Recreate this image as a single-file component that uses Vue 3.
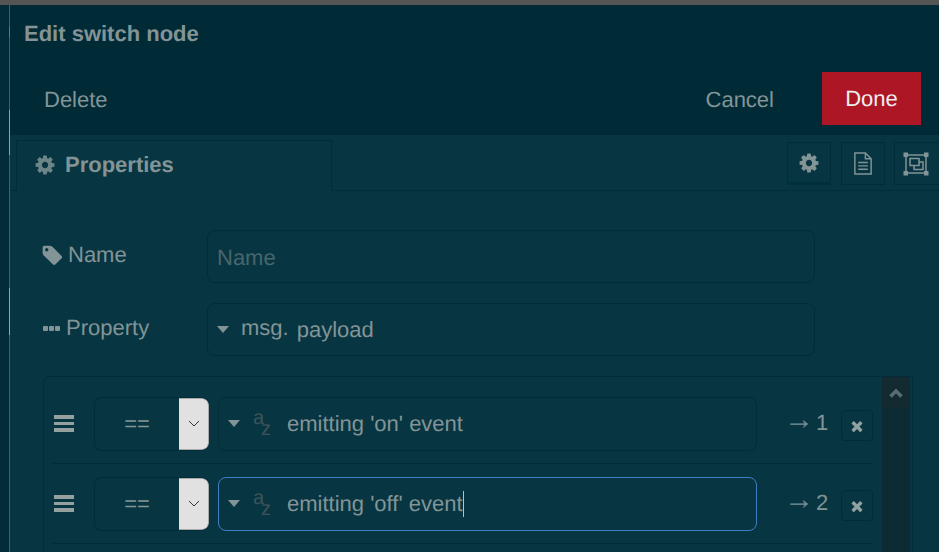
<script setup>
const rules = [
  { id: 1, text: "emitting 'on' event", port: 1, focused: false },
  { id: 2, text: "emitting 'off' event", port: 2, focused: true },
]
const cog = "M1152 896q0-106-75-181t-181-75-181 75-75 181 75 181 181 75 181-75 75-181zm512-109v222q0 12-8 23t-20 13l-185 28q-19 54-39 91 35 50 107 138 10 12 10 25t-9 23q-27 37-99 108t-94 71q-12 0-26-9l-138-108q-44 23-91 38-16 136-29 186-7 28-36 28h-222q-14 0-24.500-8.500t-11.500-21.500l-28-184q-49-16-90-37l-141 107q-10 9-25 9-14 0-25-11-126-114-165-168-7-10-7-23 0-12 8-23 15-21 51-66.500t54-70.500q-27-50-41-99l-183-27q-13-2-21-12.500t-8-23.500v-222q0-12 8-23t19-13l186-28q14-46 39-92-40-57-107-138-10-12-10-24 0-10 9-23 26-36 98.500-107.500t94.500-71.500q13 0 26 10l138 107q44-23 91-38 16-136 29-186 7-28 36-28h222q14 0 24.500 8.500t11.500 21.500l28 184q49 16 90 37l142-107q9-9 24-9 13 0 25 10 129 119 165 170 7 8 7 22 0 12-8 23-15 21-51 66.500t-54 70.500q26 50 41 98l183 28q13 2 21 12.500t8 23.500z"
const tag = "M576 448q0-53-37.500-90.500t-90.500-37.500-90.500 37.500-37.500 90.500 37.500 90.500 90.500 37.500 90.500-37.500 37.500-90.500zm1067 576q0 53-37 90l-491 492q-39 37-91 37-53 0-90-37l-715-716q-38-37-64.500-101t-26.500-117v-416q0-52 38-90t90-38h416q53 0 117 26.500t102 64.500l715 714q37 39 37 91z"
const times = "M1490 1322q0 40-28 68l-136 136q-28 28-68 28t-68-28l-294-294-294 294q-28 28-68 28t-68-28l-136-136q-28-28-28-68t28-68l294-294-294-294q-28-28-28-68t28-68l136-136q28-28 68-28t68 28l294 294 294-294q28-28 68-28t68 28l136 136q28 28 28 68t-28 68l-294 294 294 294q28 28 28 68z"
</script>

<template>
  <div class="page">
    <div class="topbar"></div>
    <div class="main">
      <div class="strip"></div>
      <div class="tray">
        <header class="head">
          <div class="title">Edit switch node</div>
          <div class="actions">
            <span class="delete">Delete</span>
            <span class="cancel">Cancel</span>
            <span class="done">Done</span>
          </div>
        </header>
        <div class="tabbar">
          <div class="tab">
            <svg class="tab-cog" viewBox="0 0 1792 1792"><path :d="cog" fill-rule="evenodd" /></svg>
            <span>Properties</span>
          </div>
          <div class="tools">
            <div class="tool active">
              <svg class="tool-cog" viewBox="0 0 1792 1792"><path :d="cog" fill-rule="evenodd" /></svg>
            </div>
            <div class="tool">
              <svg class="tool-file" viewBox="0 0 20 24" fill="none" stroke="currentColor" stroke-width="1.500">
                <path d="M1.500 1h11l6 6v16h-17z" />
                <path d="M12.500 1v6h6" />
                <path d="M5 11h10M5 14.500h10M5 18h10" />
              </svg>
            </div>
            <div class="tool">
              <svg class="tool-group" viewBox="0 0 26 24" fill="none" stroke="currentColor" stroke-width="1.500">
                <path d="M3 3h20v18h-20z" />
                <path d="M7 6.500h9v7h-9z" />
                <path d="M11 13.500v4h9v-7.500h-4" />
                <g fill="currentColor" stroke="none">
                  <rect x="0.500" y="0.500" width="4.500" height="4.500" />
                  <rect x="21" y="0.500" width="4.500" height="4.500" />
                  <rect x="0.500" y="19" width="4.500" height="4.500" />
                  <rect x="21" y="19" width="4.500" height="4.500" />
                </g>
              </svg>
            </div>
          </div>
        </div>
        <div class="body">
          <div class="form-row">
            <label class="lab">
              <svg class="tag" viewBox="0 0 1792 1792"><path :d="tag" fill-rule="evenodd" /></svg>
              <span>Name</span>
            </label>
            <div class="field placeholder"><span>Name</span></div>
          </div>
          <div class="form-row">
            <label class="lab">
              <span class="dots"><i></i><i></i><i></i></span>
              <span>Property</span>
            </label>
            <div class="field typed">
              <span class="caret-down"></span>
              <span class="msg">msg.</span>
              <span class="payload">payload</span>
            </div>
          </div>
          <div class="list">
            <div class="rows">
              <div v-for="r in rules" :key="r.id" class="rule">
                <span class="grip"><i></i><i></i><i></i></span>
                <div class="select">
                  <span class="op">==</span>
                  <span class="chev">
                    <svg viewBox="0 0 12 7" fill="none" stroke="#333" stroke-width="1"><path d="M1 1l5 5 5-5" /></svg>
                  </span>
                </div>
                <div class="value" :class="{ focused: r.focused }">
                  <span class="caret-down"></span>
                  <span class="az"><span class="a">a</span><span class="z">z</span></span>
                  <span class="vtext">{{ r.text }}<span v-if="r.focused" class="cursor"></span></span>
                </div>
                <span class="port"><span class="arrow">→</span><span class="num">{{ r.port }}</span></span>
                <span class="x">
                  <svg viewBox="0 0 1792 1792"><path :d="times" /></svg>
                </span>
              </div>
            </div>
            <div class="scroll">
              <div class="up">
                <svg viewBox="0 0 14 10" fill="none" stroke="currentColor" stroke-width="3.500"><path d="M1.500 8.500l5.500-5.500 5.500 5.500" /></svg>
              </div>
            </div>
          </div>
        </div>
      </div>
    </div>
  </div>
</template>

<style>
html, body { margin: 0; background: #063440; overflow: hidden; }
</style>

<style scoped>
.page {
  width: 939px;
  height: 552px;
  overflow: hidden;
  display: flex;
  flex-direction: column;
  font-family: "Liberation Sans", Arial, sans-serif;
  font-size: 22px;
  color: #839496;
  text-rendering: geometricPrecision;
}
.topbar { height: 5px; background: #555; flex: none; }
.main { flex: 1; display: flex; min-height: 0; }
.strip {
  width: 10px;
  flex: none;
  background:
    linear-gradient(to bottom,
      #3f6068 0, #3f6068 22px,
      #5d7a80 22px, #5d7a80 32px,
      #3f6068 32px, #3f6068 105px,
      #93a59a 105px, #93a59a 150px,
      #3f6068 150px, #3f6068 283px,
      #8fa5a8 283px, #8fa5a8 330px,
      #3f6068 330px, #3f6068 100%) right top / 1px 100% no-repeat,
    #012c38;
}
.tray { flex: 1; min-width: 0; background: #073642; display: flex; flex-direction: column; }
.head { height: 130px; flex: none; background: #002b36; padding-left: 14px; box-sizing: border-box; }
.title { font-weight: 700; line-height: 25px; padding-top: 16px; }
.actions { display: flex; align-items: center; margin-top: 26px; height: 53px; padding-right: 18px; }
.delete { margin-left: 20px; margin-right: auto; padding-top: 3px; }
.cancel { margin-right: 48px; padding-top: 3px; }
.done {
  width: 99px;
  height: 53px;
  background: #ad1625;
  color: #eee;
  display: flex;
  align-items: center;
  justify-content: center;
}
.tabbar {
  height: 56px;
  flex: none;
  box-sizing: border-box;
  border-bottom: 1px solid #022c38;
  display: flex;
  justify-content: space-between;
  align-items: flex-end;
  padding-left: 6px;
}
.tab {
  width: 316px;
  height: 51px;
  box-sizing: border-box;
  margin-bottom: -1px;
  border: 1px solid #022c38;
  border-bottom-color: #073642;
  display: flex;
  align-items: center;
  padding: 0 0 2px 17px;
  gap: 9px;
  font-weight: 700;
  background: #073642;
}
.tab-cog { width: 22px; height: 22px; fill: #6d8589; }
.tools { display: flex; gap: 10px; align-self: flex-start; margin-top: 7px; }
.tool {
  width: 44px;
  height: 43px;
  box-sizing: border-box;
  border: 1px solid #022c38;
  display: flex;
  align-items: center;
  justify-content: center;
  color: #839496;
}
.tool:nth-child(2) { margin-right: -1px; }
.tool:last-child { width: 45px; border-right: 0; padding-right: 2px; }
.tool.active { border-bottom: 3px solid #00303b; }
.tool-cog { width: 22px; height: 22px; fill: #839496; }
.tool-file { width: 20px; height: 23px; }
.tool-group { width: 26px; height: 24px; }
.body { flex: 1; min-height: 0; padding: 39px 0 0 33px; }
.form-row { display: flex; align-items: center; height: 53px; margin-bottom: 20px; }
.lab { width: 164px; flex: none; display: flex; align-items: center; gap: 5px; margin-top: -3px; }
.tag { width: 23px; height: 23px; fill: #839496; margin: 0 -1px 0 -2px; }
.dots { display: flex; gap: 1px; width: 18px; }
.dots i { width: 5px; height: 5px; background: #839496; border-radius: 1px; }
.field {
  width: 608px;
  height: 53px;
  box-sizing: border-box;
  border: 1px solid #022c38;
  border-radius: 8px;
  display: flex;
  align-items: center;
}
.placeholder { color: #49666c; padding: 2px 0 0 9px; }
.typed { padding-left: 9px; }
.caret-down {
  width: 0;
  height: 0;
  border-left: 6.500px solid transparent;
  border-right: 6.500px solid transparent;
  border-top: 7px solid #839496;
  flex: none;
}
.msg { margin-left: 12px; margin-top: -3px; }
.payload { margin-left: 8px; }
.list {
  display: flex;
  width: 870px;
  height: 300px;
  box-sizing: border-box;
  border: 1px solid #022c38;
  border-radius: 6px 0 0 0;
}
.rows { flex: 1; min-width: 0; padding: 7px 9px 0 8px; }
.rule {
  display: flex;
  align-items: center;
  height: 80px;
  box-sizing: border-box;
  border-bottom: 1px solid #022c38;
}
.grip { width: 20px; display: flex; flex-direction: column; gap: 3px; margin-left: 2px; margin-right: 20px; flex: none; }
.grip i { height: 3.500px; background: #93a1a1; }
.select {
  width: 115px;
  height: 54px;
  flex: none;
  box-sizing: border-box;
  border: 1px solid #022c38;
  border-right: 0;
  border-radius: 8px;
  display: flex;
  overflow: hidden;
}
.op { flex: 1; text-align: center; line-height: 52px; }
.chev {
  width: 30px;
  background: #e1e1e1;
  border: 1px solid #aaa;
  border-left: 0;
  border-radius: 0 7px 7px 0;
  box-sizing: border-box;
  display: flex;
  align-items: center;
  justify-content: center;
}
.chev svg { width: 12px; height: 7px; }
.value {
  width: 539px;
  height: 54px;
  flex: none;
  margin-left: 9px;
  box-sizing: border-box;
  border: 1px solid #022c38;
  border-radius: 8px;
  display: flex;
  align-items: center;
  padding-left: 9px;
}
.value.focused { border-color: #3f7fc4; }
.az { width: 20px; height: 30px; margin-left: 13px; position: relative; display: block; color: #3e5358; font-size: 20px; flex: none; }
.a { position: absolute; left: 0; top: 4px; line-height: 10px; display: block; letter-spacing: -3px; }
.z { position: absolute; left: 8px; top: 15px; line-height: 10px; display: block; }
.vtext { margin-left: 14px; display: flex; white-space: pre; color: #839496; }
.cursor { width: 1px; height: 26px; background: #b5c0c0; align-self: center; }
.port { width: 84px; flex: none; box-sizing: border-box; padding-left: 27px; white-space: nowrap; display: flex; align-items: center; height: 30px; }
.arrow { font-size: 30px; line-height: 30px; width: 32px; margin-top: -7px; font-weight: 400; color: #7a8f92; }
.num { margin-bottom: 2px; }
.x {
  width: 32px;
  height: 31px;
  box-sizing: border-box;
  margin-top: 4px;
  border: 1px solid #022c38;
  border-radius: 4px;
  display: flex;
  align-items: center;
  justify-content: center;
  flex: none;
}
.x svg { width: 16px; height: 16px; fill: #93a1a1; }
.scroll { width: 28px; flex: none; background: #0c2b33; margin-right: 2px; }
.up {
  height: 31px;
  background: #132a30;
  color: #586e75;
  display: flex;
  align-items: center;
  justify-content: center;
}
.up svg { width: 14px; height: 10px; }
</style>
